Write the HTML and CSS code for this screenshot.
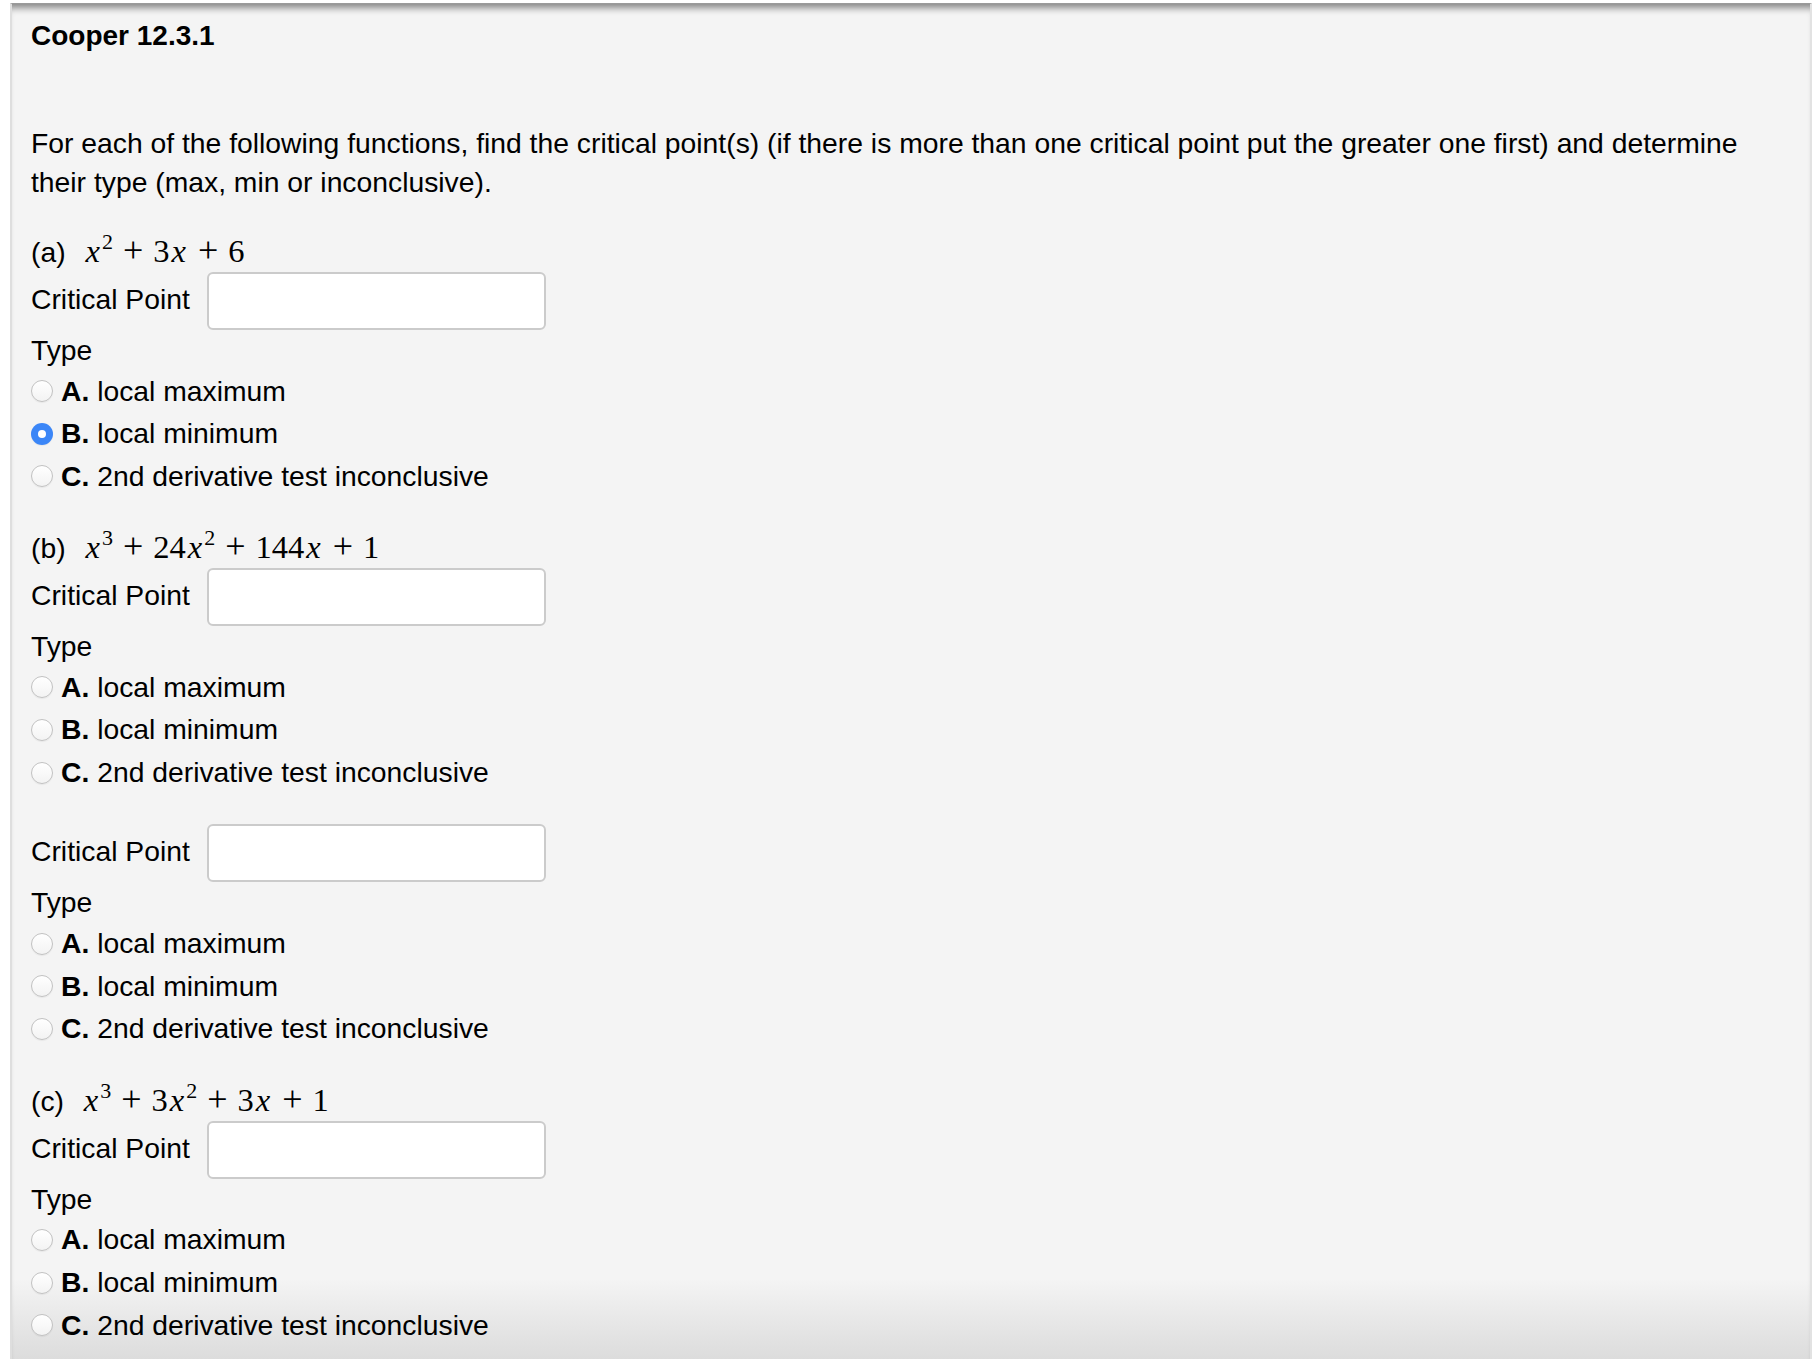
FILE: index.html
```html
<!DOCTYPE html>
<html>
<head>
<meta charset="utf-8">
<title>Cooper 12.3.1</title>
<link rel="stylesheet" href="styles.css">
</head>
<body>
<div class="panel">
  <h1 class="title">Cooper 12.3.1</h1>
  <p class="intro">For each of the following functions, find the critical point(s) (if there is more than one critical point put the greater one first) and determine their type (max, min or inconclusive).</p>

  <div class="part">
    <div class="part-label">(a) <span class="math"><i>x</i><sup>2</sup><span class="op">+</span>3<i>x</i><span class="op">+</span>6</span></div>
    <div class="cp-row"><span class="cp-label">Critical Point</span><span class="answer"></span></div>
    <div class="type-label">Type</div>
    <div class="options">
      <div class="option"><span class="radio"></span><b>A.</b>&nbsp;local maximum</div>
      <div class="option"><span class="radio checked"></span><b>B.</b>&nbsp;local minimum</div>
      <div class="option"><span class="radio"></span><b>C.</b>&nbsp;2nd derivative test inconclusive</div>
    </div>
  </div>

  <div class="part">
    <div class="part-label">(b) <span class="math"><i>x</i><sup>3</sup><span class="op">+</span>24<i>x</i><sup>2</sup><span class="op">+</span>144<i>x</i><span class="op">+</span>1</span></div>
    <div class="cp-row"><span class="cp-label">Critical Point</span><span class="answer"></span></div>
    <div class="type-label">Type</div>
    <div class="options">
      <div class="option"><span class="radio"></span><b>A.</b>&nbsp;local maximum</div>
      <div class="option"><span class="radio"></span><b>B.</b>&nbsp;local minimum</div>
      <div class="option"><span class="radio"></span><b>C.</b>&nbsp;2nd derivative test inconclusive</div>
    </div>
    <div class="cp-row"><span class="cp-label">Critical Point</span><span class="answer"></span></div>
    <div class="type-label">Type</div>
    <div class="options">
      <div class="option"><span class="radio"></span><b>A.</b>&nbsp;local maximum</div>
      <div class="option"><span class="radio"></span><b>B.</b>&nbsp;local minimum</div>
      <div class="option"><span class="radio"></span><b>C.</b>&nbsp;2nd derivative test inconclusive</div>
    </div>
  </div>

  <div class="part">
    <div class="part-label">(c) <span class="math"><i>x</i><sup>3</sup><span class="op">+</span>3<i>x</i><sup>2</sup><span class="op">+</span>3<i>x</i><span class="op">+</span>1</span></div>
    <div class="cp-row"><span class="cp-label">Critical Point</span><span class="answer"></span></div>
    <div class="type-label">Type</div>
    <div class="options">
      <div class="option"><span class="radio"></span><b>A.</b>&nbsp;local maximum</div>
      <div class="option"><span class="radio"></span><b>B.</b>&nbsp;local minimum</div>
      <div class="option"><span class="radio"></span><b>C.</b>&nbsp;2nd derivative test inconclusive</div>
    </div>
  </div>
</div>
</body>
</html>
```

FILE: styles.css
```css
html, body {
  margin: 0;
  padding: 0;
  height: 100%;
  overflow: hidden;
  background: #ffffff;
}

body {
  font-family: "Liberation Sans", Arial, Helvetica, sans-serif;
  font-size: 28.3px;
  color: #000;
}

.panel {
  box-sizing: border-box;
  margin: 3px 5px 0 10px;
  height: calc(100vh - 3px);
  border-left: 2px solid #dedede;
  border-right: 2px solid #e2e2e2;
  border-top: 1px solid #9a9a9a;
  padding: 12px 40px 0 19px;
  background: linear-gradient(to bottom, #f4f4f4 0, #f4f4f4 calc(100% - 80px), #dcdcdc 100%);
  box-shadow: inset 0 9px 7px -5px rgba(0, 0, 0, 0.45);
  overflow: hidden;
}

.title {
  margin: 0;
  font-size: 28px;
  font-weight: bold;
  line-height: 40px;
}

.intro {
  margin: 68px 0 29px 0;
  line-height: 39.4px;
}

.part-label {
  line-height: 39px;
}

.math {
  font-family: "Liberation Serif", "Times New Roman", serif;
  font-size: 32.5px;
  margin-left: 10px;
}

.math i {
  font-style: italic;
  padding: 0 2px;
}

.math sup {
  font-size: 22px;
  line-height: 0;
  vertical-align: 13px;
}

.op {
  font-size: 36px;
  line-height: 0;
  margin: 0 10px;
}

.cp-row {
  display: flex;
  align-items: center;
  height: 58px;
}

.cp-label {
  margin-right: 17px;
  padding-bottom: 3px;
}

.answer {
  box-sizing: border-box;
  width: 339px;
  height: 58px;
  background: #fff;
  border: 2px solid #cbcbcb;
  border-radius: 6px;
}

.type-label {
  line-height: 40px;
}

.options {
  margin-bottom: 30.5px;
}

.option {
  display: flex;
  align-items: center;
  height: 42.6px;
}

.option b {
  font-weight: bold;
}

.radio {
  box-sizing: border-box;
  width: 22px;
  height: 22px;
  border-radius: 50%;
  margin: 0 8px 0 0;
  border: 1px solid #c2c2c2;
  background: linear-gradient(to bottom, #ffffff, #f3f3f3);
  box-shadow: 0 1px 1px rgba(0, 0, 0, 0.05);
  display: flex;
  align-items: center;
  justify-content: center;
}

.radio.checked {
  border: none;
  background: #3b86f7;
}

.radio.checked::after {
  content: "";
  width: 8px;
  height: 8px;
  border-radius: 50%;
  background: #fff;
}
```
